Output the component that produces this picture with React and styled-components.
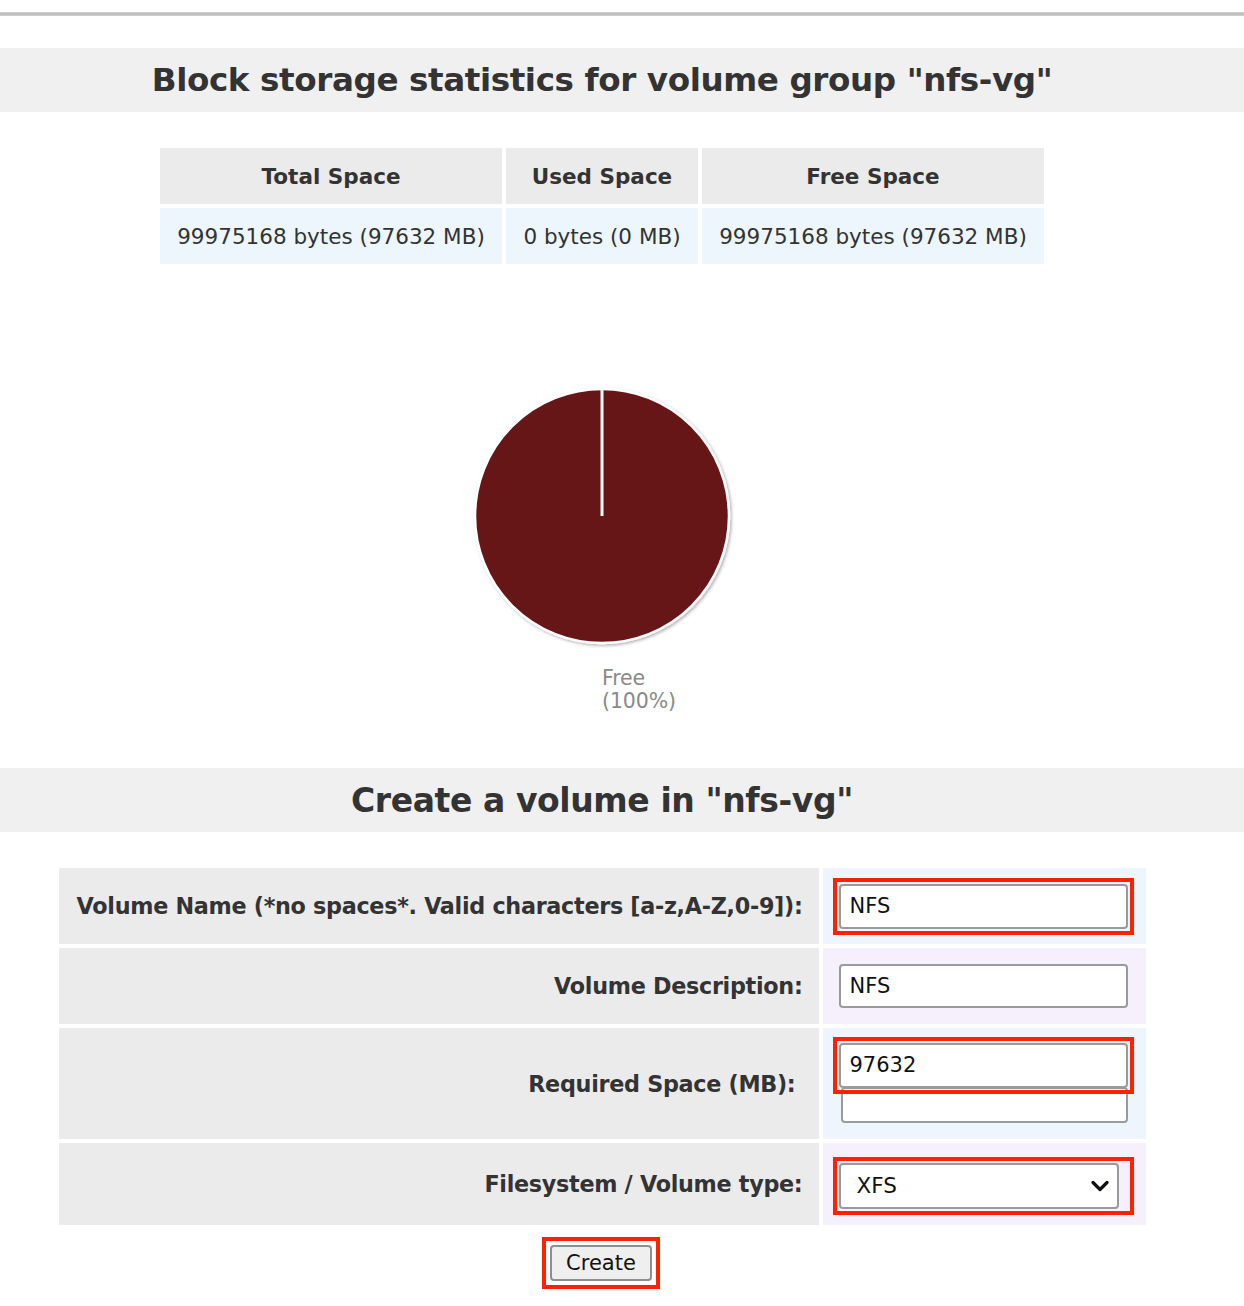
import React from "react";
import styled, { createGlobalStyle } from "styled-components";

const GlobalStyle = createGlobalStyle`
  html, body {
    margin: 0;
    padding: 0;
    background: #ffffff;
  }
  body {
    font-family: "DejaVu Sans", Verdana, sans-serif;
    color: #333333;
  }
`;

const Page = styled.div`
  width: 1204px;
  padding: 12px 40px 17px 0;
`;

const TopRule = styled.div`
  height: 4px;
  margin-right: -40px;
  background: linear-gradient(#d6d6d6, #b9b9b9 50%, #d6d6d6);
`;

const SectionTitle = styled.h2`
  margin: ${(p) => p.$top}px -40px 0 0;
  padding-right: 40px;
  height: 64px;
  background: #f0f0f0;
  display: flex;
  align-items: center;
  justify-content: center;
  font-size: ${(p) => p.$size || 33}px;
  font-weight: bold;
  letter-spacing: -0.4px;
  color: #333333;
`;

const StatsTable = styled.table`
  margin: 32px auto 0;
  border-spacing: 4px;
  font-size: 21.5px;
`;

const HeadCell = styled.th`
  height: 56px;
  padding: 0 10px;
  background: #ebebeb;
  font-weight: bold;
  text-align: center;
  width: ${(p) => p.$w}px;
  box-sizing: border-box;
`;

const DataCell = styled.td`
  height: 56px;
  padding: 0 10px;
  background: #eef6fd;
  text-align: center;
  white-space: nowrap;
  box-sizing: border-box;
`;

const ChartArea = styled.div`
  height: 500px;
  box-sizing: border-box;
  padding-top: 116px;
  display: flex;
  flex-direction: column;
  align-items: center;
`;

const Legend = styled.div`
  width: 264px;
  box-sizing: border-box;
  padding-left: 132px;
  margin-top: 19px;
  font-size: 20.5px;
  line-height: 23px;
  color: #8a8a8a;
  letter-spacing: -0.1px;
  white-space: nowrap;
`;

const FormTable = styled.table`
  margin: 32px auto 0;
  border-spacing: 4px;
`;

const LabelCell = styled.td`
  width: 760px;
  height: ${(p) => p.$h}px;
  box-sizing: border-box;
  padding: 0 ${(p) => p.$pr || 16}px 0 8px;
  background: #ebebeb;
  text-align: right;
  font-size: 22.3px;
  font-weight: bold;
  letter-spacing: -0.3px;
  white-space: nowrap;
`;

const ValueCell = styled.td`
  width: 323px;
  box-sizing: border-box;
  padding: ${(p) => p.$pt || 0}px 0 ${(p) => p.$pb || 0}px 10px;
  background: ${(p) => (p.$tint === "violet" ? "#f6effc" : "#eef5fc")};
  vertical-align: middle;
`;

const Marked = styled.div`
  position: relative;
  z-index: 1;
  display: ${(p) => (p.$inline ? "inline-block" : "block")};
  width: ${(p) => (p.$inline ? "auto" : "301px")};
  box-sizing: border-box;
  padding: ${(p) => p.$pad || 2}px;
  border: 4px solid ${(p) => (p.$on ? "#ff2200" : "transparent")};
`;

const TextInput = styled.input`
  display: block;
  width: 100%;
  height: ${(p) => p.$h || 45}px;
  box-sizing: border-box;
  margin: 0;
  padding: 0 9px;
  border: 2px solid #9a9a9a;
  border-radius: 4px;
  background: #ffffff;
  font-family: "DejaVu Sans", Verdana, sans-serif;
  font-size: 21px;
  color: #111111;
  outline: none;
`;

const ExtraInput = styled(TextInput)`
  width: 287px;
  margin: -7px 0 0 8px;
  position: relative;
  z-index: 0;
`;

const SelectBox = styled.div`
  position: relative;
  width: 280px;
  height: 46px;
  box-sizing: border-box;
  border: 2px solid #9a9a9a;
  border-radius: 4px;
  background: #ffffff;
  display: flex;
  align-items: center;
  padding: 0 8px 0 16px;
  font-size: 21.5px;
  color: #111111;
`;

const SelectValue = styled.span`
  flex: 1;
`;

const Actions = styled.div`
  display: flex;
  justify-content: center;
  margin-top: 8px;
  padding-right: 2px;
`;

const Button = styled.button`
  width: 102px;
  height: 36px;
  margin: 0;
  padding: 0;
  border: 2px solid #8f8f8f;
  border-radius: 4px;
  background: #efefef;
  font-family: "DejaVu Sans", Verdana, sans-serif;
  font-size: 21px;
  color: #111111;
  cursor: pointer;
`;

const Chevron = () => (
  <svg width="18" height="12" viewBox="0 0 18 12">
    <path d="M2 2.5 L9 9.5 L16 2.5" fill="none" stroke="#111" strokeWidth="3.2" strokeLinecap="round" strokeLinejoin="round" />
  </svg>
);

const Pie = () => (
  <svg width="264" height="264" viewBox="0 0 264 264">
    <defs>
      <filter id="pieShadow" x="-10%" y="-10%" width="120%" height="120%">
        <feDropShadow dx="1.5" dy="1.5" stdDeviation="1.6" floodColor="#000" floodOpacity="0.3" />
      </filter>
    </defs>
    <circle cx="132" cy="132" r="127" fill="#661818" stroke="#ffffff" strokeWidth="2.5" filter="url(#pieShadow)" />
    <line x1="132" y1="5" x2="132" y2="132" stroke="#ffffff" strokeWidth="3" />
  </svg>
);

export default function App() {
  return (
    <Page>
      <GlobalStyle />
      <TopRule />
      <SectionTitle $top={32} $size={32.6}>Block storage statistics for volume group "nfs-vg"</SectionTitle>

      <StatsTable>
        <thead>
          <tr>
            <HeadCell $w={342}>Total Space</HeadCell>
            <HeadCell $w={192}>Used Space</HeadCell>
            <HeadCell $w={342}>Free Space</HeadCell>
          </tr>
        </thead>
        <tbody>
          <tr>
            <DataCell>99975168 bytes (97632 MB)</DataCell>
            <DataCell>0 bytes (0 MB)</DataCell>
            <DataCell>99975168 bytes (97632 MB)</DataCell>
          </tr>
        </tbody>
      </StatsTable>

      <ChartArea>
        <Pie />
        <Legend>
          Free
          <br />
          (100%)
        </Legend>
      </ChartArea>

      <SectionTitle $top={0}>Create a volume in "nfs-vg"</SectionTitle>

      <FormTable>
        <tbody>
          <tr>
            <LabelCell $h={76}>Volume Name (*no spaces*. Valid characters [a-z,A-Z,0-9]):</LabelCell>
            <ValueCell $tint="blue">
              <Marked $on>
                <TextInput defaultValue="NFS" />
              </Marked>
            </ValueCell>
          </tr>
          <tr>
            <LabelCell $h={76}>Volume Description:</LabelCell>
            <ValueCell $tint="violet">
              <Marked>
                <TextInput defaultValue="NFS" $h={44} />
              </Marked>
            </ValueCell>
          </tr>
          <tr>
            <LabelCell $h={111} $pr={23}>Required Space (MB):</LabelCell>
            <ValueCell $tint="blue" $pb={8}>
              <Marked $on>
                <TextInput defaultValue="97632" />
              </Marked>
              <ExtraInput $h={36} />
            </ValueCell>
          </tr>
          <tr>
            <LabelCell $h={82}>Filesystem / Volume type:</LabelCell>
            <ValueCell $tint="violet" $pt={3}>
              <Marked $on>
                <SelectBox>
                  <SelectValue>XFS</SelectValue>
                  <Chevron />
                </SelectBox>
              </Marked>
            </ValueCell>
          </tr>
        </tbody>
      </FormTable>

      <Actions>
        <Marked $on $inline $pad={4}>
          <Button type="button">Create</Button>
        </Marked>
      </Actions>
    </Page>
  );
}
